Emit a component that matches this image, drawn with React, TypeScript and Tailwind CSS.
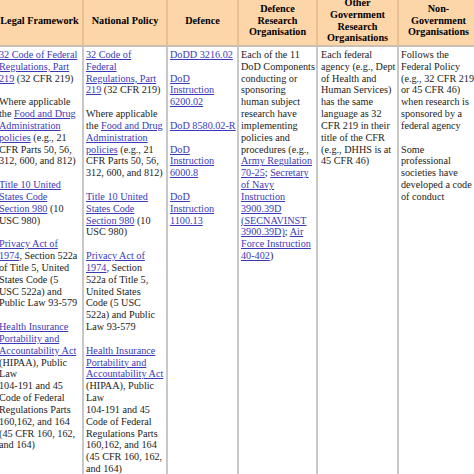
import React from "react";

const L = ({ children }: { children: React.ReactNode }) => (
  <span className="text-[#3a3ab8] underline decoration-[#3a3ab8]">{children}</span>
);

const Lines = ({ lines }: { lines: React.ReactNode[] }) => (
  <p className="whitespace-nowrap">
    {lines.map((l, i) => (
      <React.Fragment key={i}>
        {l}
        {i < lines.length - 1 && <br />}
      </React.Fragment>
    ))}
  </p>
);

export default function App() {
  return (
    <div className="w-[474px] h-[474px] overflow-hidden bg-white text-[#1c1c1c] text-[10.2px] leading-[11.83px] [font-family:'Liberation_Serif','Times_New_Roman',serif]">
      <div className="-ml-[3px] -mt-[4px] w-[481px]">
        {/* Header */}
        <div className="flex h-[51px] bg-[#fcd5a8] border-b-2 border-[#cbbfb1] font-bold text-center text-black">
          <div className="w-[87px] shrink-0 border-r-2 border-[#e8c092] flex items-center justify-center">Legal Framework</div>
          <div className="w-[84px] shrink-0 border-r-2 border-[#e8c092] flex items-center justify-center">National Policy</div>
          <div className="w-[71px] shrink-0 border-r-2 border-[#e8c092] flex items-center justify-center">Defence</div>
          <div className="w-[79px] shrink-0 border-r-2 border-[#e8c092] flex items-center justify-center">
            <span>Defence<br />Research<br />Organisation</span>
          </div>
          <div className="w-[81px] shrink-0 border-r-2 border-[#e8c092] flex items-center justify-center">
            <span>Other<br />Government<br />Research<br />Organisations</span>
          </div>
          <div className="w-[79px] shrink-0 flex items-center justify-center">
            <span>Non-<br />Government<br />Organisations</span>
          </div>
        </div>
        {/* Body */}
        <div className="flex h-[440px]">
          <div className="w-[87px] shrink-0 border-r-2 border-[#c8c8c8] pl-[2px] pt-[2px] flex flex-col gap-[11.83px]">
            <Lines lines={[<L>32 Code of Federal</L>, <L>Regulations, Part</L>, <><L>219</L> (32 CFR 219)</>]} />
            <Lines lines={["Where applicable", <>the <L>Food and Drug</L></>, <L>Administration</L>, <><L>policies</L> (e.g., 21</>, "CFR Parts 50, 56,", "312, 600, and 812)"]} />
            <Lines lines={[<L>Title 10 United</L>, <L>States Code</L>, <><L>Section 980</L> (10</>, "USC 980)"]} />
            <Lines lines={[<L>Privacy Act of</L>, <><L>1974</L>, Section 522a</>, "of Title 5, United", "States Code (5", "USC 522a) and", "Public Law 93-579"]} />
            <Lines lines={[<L>Health Insurance</L>, <L>Portability and</L>, <L>Accountability Act</L>, "(HIPAA), Public", "Law", "104-191 and 45", "Code of Federal", "Regulations Parts", "160,162, and 164", "(45 CFR 160, 162,", "and 164)"]} />
          </div>
          <div className="w-[84px] shrink-0 border-r-2 border-[#c8c8c8] pl-[2px] pt-[2px] flex flex-col gap-[11.83px]">
            <Lines lines={[<L>32 Code of</L>, <L>Federal</L>, <L>Regulations, Part</L>, <><L>219</L> (32 CFR 219)</>]} />
            <Lines lines={["Where applicable", <>the <L>Food and Drug</L></>, <L>Administration</L>, <><L>policies</L> (e.g., 21</>, "CFR Parts 50, 56,", "312, 600, and 812)"]} />
            <Lines lines={[<L>Title 10 United</L>, <L>States Code</L>, <><L>Section 980</L> (10</>, "USC 980)"]} />
            <Lines lines={[<L>Privacy Act of</L>, <><L>1974</L>, Section</>, "522a of Title 5,", "United States", "Code (5 USC", "522a) and Public", "Law 93-579"]} />
            <Lines lines={[<L>Health Insurance</L>, <L>Portability and</L>, <L>Accountability Act</L>, "(HIPAA), Public", "Law", "104-191 and 45", "Code of Federal", "Regulations Parts", "160,162, and 164", "(45 CFR 160, 162,", "and 164)"]} />
          </div>
          <div className="w-[71px] shrink-0 border-r-2 border-[#c8c8c8] pl-[2px] pt-[2px] flex flex-col gap-[11.83px]">
            <Lines lines={[<L>DoDD 3216.02</L>]} />
            <Lines lines={[<L>DoD</L>, <L>Instruction</L>, <L>6200.02</L>]} />
            <Lines lines={[<L>DoD 8580.02-R</L>]} />
            <Lines lines={[<L>DoD</L>, <L>Instruction</L>, <L>6000.8</L>]} />
            <Lines lines={[<L>DoD</L>, <L>Instruction</L>, <L>1100.13</L>]} />
          </div>
          <div className="w-[79px] shrink-0 border-r-2 border-[#c8c8c8] pl-[2px] pt-[2px]">
            <Lines lines={["Each of the 11", "DoD Components", "conducting or", "sponsoring", "human subject", "research have", "implementing", "policies and", "procedures (e.g.,", <L>Army Regulation</L>, <><L>70-25</L>; <L>Secretary</L></>, <L>of Navy</L>, <L>Instruction</L>, <L>3900.39D</L>, <L>(SECNAVINST</L>, <><L>3900.39D)</L>; <L>Air</L></>, <L>Force Instruction</L>, <><L>40-402</L>)</>]} />
          </div>
          <div className="w-[81px] shrink-0 border-r-2 border-[#c8c8c8] pl-[3px] pt-[2px]">
            <Lines lines={["Each federal", "agency (e.g., Dept", "of Health and", "Human Services)", "has the same", "language as 32", "CFR 219 in their", "title of the CFR", "(e.g., DHHS is at", "45 CFR 46)"]} />
          </div>
          <div className="w-[79px] shrink-0 pl-[2px] pt-[2px] flex flex-col gap-[11.83px]">
            <Lines lines={["Follows the", "Federal Policy", "(e.g., 32 CFR 219", "or 45 CFR 46)", "when research is", "sponsored by a", "federal agency"]} />
            <Lines lines={["Some", "professional", "societies have", "developed a code", "of conduct"]} />
          </div>
        </div>
      </div>
    </div>
  );
}
